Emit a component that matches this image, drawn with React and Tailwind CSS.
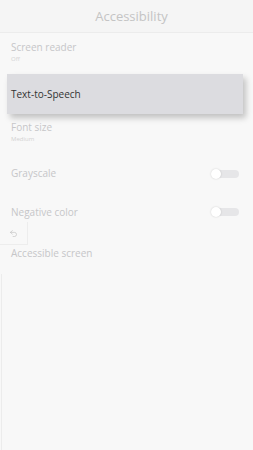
import React from 'react';
import { Undo2 } from 'lucide-react';

function Toggle() {
  return (
    <div className="relative w-[28px] h-[12px] flex items-center">
      <div className="ml-[3px] w-[25px] h-[8px] rounded-full bg-[#e6e6e8]" />
      <div className="absolute left-0 top-[1px] w-[10px] h-[10px] rounded-full bg-white shadow-[0_0_2px_rgba(0,0,0,0.18)]" />
    </div>
  );
}

export default function App() {
  return (
    <div
      className="relative w-[253px] h-[450px] overflow-hidden bg-[#f8f8f8] text-[#c6c6c8]"
      style={{ fontFamily: '"Open Sans", "Noto Sans", sans-serif' }}
    >
      {/* Header */}
      <div className="h-[33px] flex items-center justify-center pl-[10px] bg-[#f5f5f5] border-b border-[#ececec]">
        <span className="text-[13px] text-[#c4c4c4] leading-none">Accessibility</span>
      </div>

      {/* Screen reader */}
      <div className="h-[41px] pl-[11px] pt-[8px]">
        <div className="text-[10px] leading-[13px]">Screen reader</div>
        <div className="text-[6px] leading-[8px] mt-[1px] text-[#d2d2d2]">Off</div>
      </div>

      {/* Focused row */}
      <div className="ml-[7px] w-[236px] h-[40px] flex items-center pl-[4px] bg-[#dcdce0] shadow-[3px_4px_6px_rgba(0,0,0,0.22)]">
        <span className="text-[10px] text-[#333333]">Text-to-Speech</span>
      </div>

      {/* Font size */}
      <div className="h-[41px] pl-[11px] pt-[7px]">
        <div className="text-[10px] leading-[13px]">Font size</div>
        <div className="text-[6px] leading-[8px] mt-[1px] text-[#d2d2d2]">Medium</div>
      </div>

      {/* Grayscale */}
      <div className="h-[37px] pl-[11px] pr-[14px] flex items-center justify-between">
        <span className="text-[10px]">Grayscale</span>
        <Toggle />
      </div>

      {/* Negative color */}
      <div className="h-[40px] pl-[11px] pr-[14px] flex items-center justify-between">
        <span className="text-[10px]">Negative color</span>
        <Toggle />
      </div>

      {/* Accessible screen */}
      <div className="h-[42px] pl-[11px] flex items-center">
        <span className="text-[10px]">Accessible screen</span>
      </div>

      <div className="ml-[1px] h-[200px] border-l border-[#ececec]" />

      {/* Back button overlay */}
      <div className="absolute left-0 top-[222px] w-[28px] h-[23px] flex items-center justify-center border-r border-b border-[#ededed] bg-[#f8f8f8]">
        <Undo2 className="w-[9px] h-[9px] text-[#b8b8b8]" strokeWidth={1.5} />
      </div>
    </div>
  );
}
